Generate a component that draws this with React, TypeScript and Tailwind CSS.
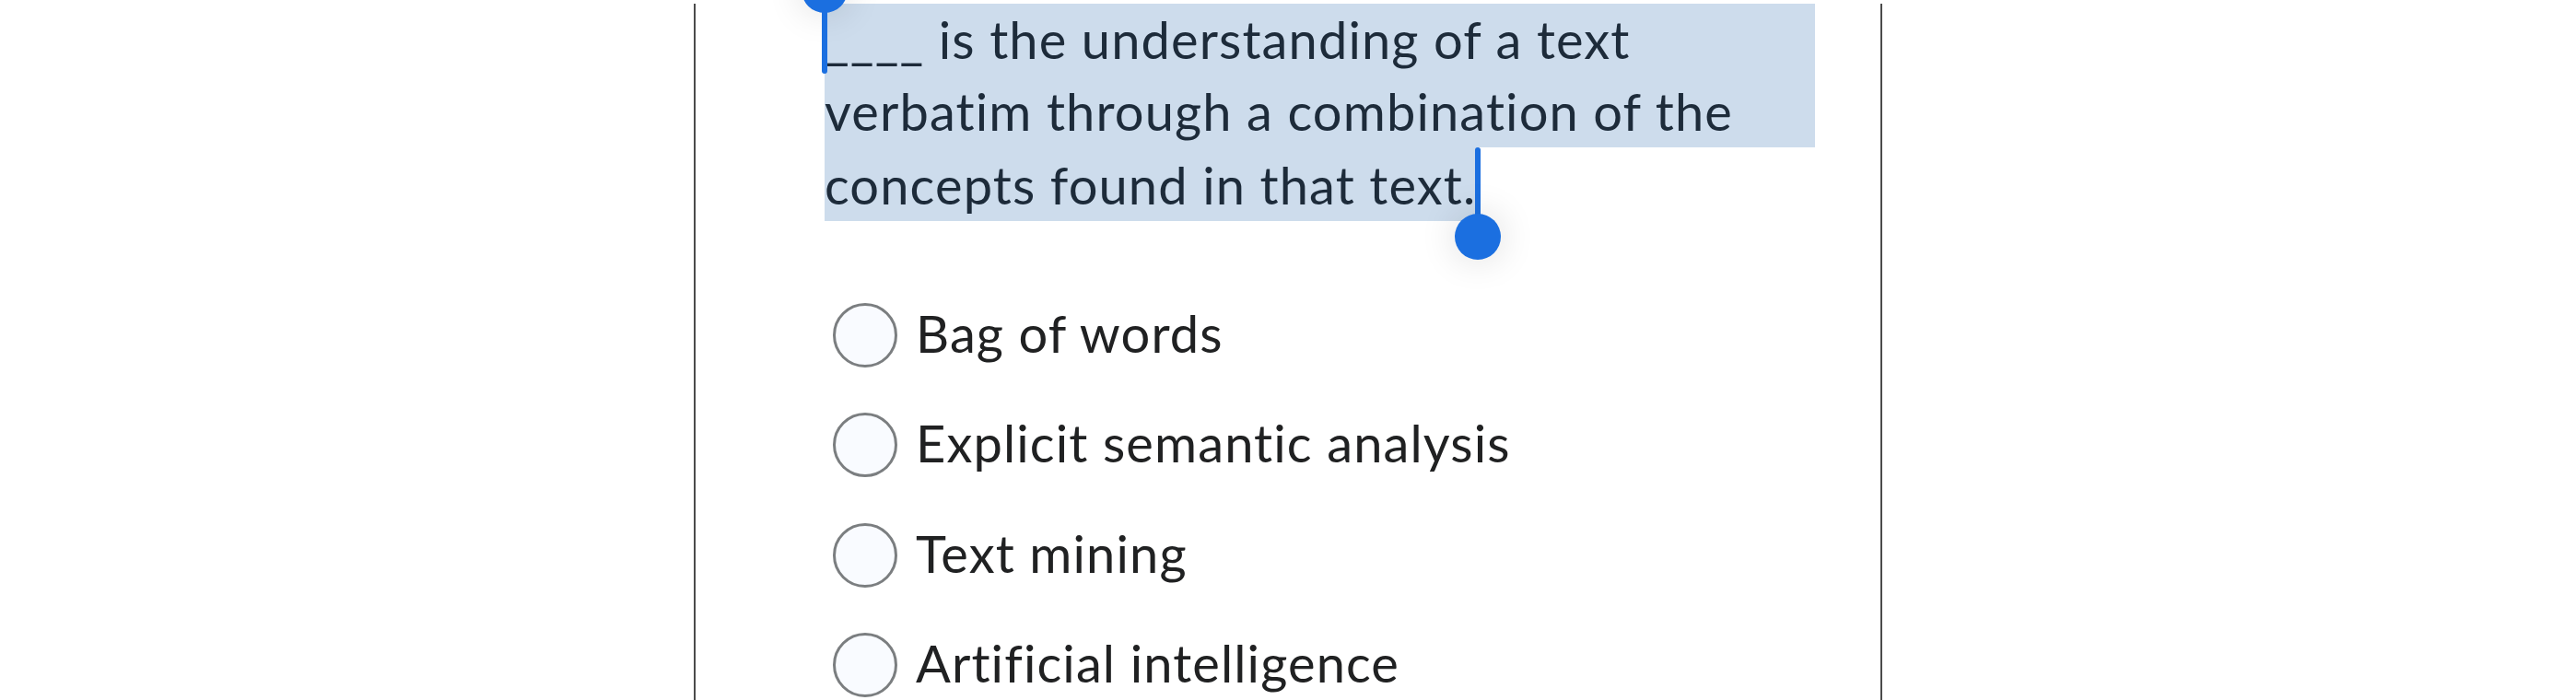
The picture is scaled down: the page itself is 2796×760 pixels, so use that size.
import React from 'react';

const options = ['Bag of words', 'Explicit semantic analysis', 'Text mining', 'Artificial intelligence'];

function Handle({ top }: { top: boolean }) {
  // iOS style selection handle: a stem with a round knob
  return (
    <div className="absolute flex flex-col items-center" style={top ? { left: -25, top: -40 } : { right: -25, top: 0 }}>
      {top ? (
        <>
          <div className="w-[50px] h-[50px] rounded-full bg-[#1b6fe0] shadow-[0_0_40px_rgba(0,0,0,0.14)]" />
          <div className="w-[6px] h-[68px] -mt-[2px] rounded-b-full bg-[#1b6fe0]" />
        </>
      ) : (
        <>
          <div className="w-[6px] h-[76px] rounded-t-full bg-[#1b6fe0]" />
          <div className="w-[50px] h-[50px] -mt-[4px] rounded-full bg-[#1b6fe0] shadow-[0_0_40px_rgba(0,0,0,0.14)]" />
        </>
      )}
    </div>
  );
}

export default function App() {
  return (
    <div className="w-full h-[760px] bg-white overflow-hidden font-['Lato','Noto_Sans',sans-serif] [font-variant-ligatures:none]">
      <div className="ml-[753px] w-[1290px] h-full border-x-2 border-[#4a4a4a] pl-[140px] pr-[71px]">
        <div className="relative mt-[4px] text-[56px] tracking-[0.02em] leading-[78px] text-[#1d2b3a]">
          <div className="relative bg-[#cddcec] pl-[1px]">
            <Handle top />
            ____ is the understanding of a text
          </div>
          <div className="bg-[#cddcec]">verbatim through a combination of the</div>
          <div className="flex">
            <span className="relative bg-[#cddcec] pr-[2px] h-[80px] pt-[2px]">
              concepts found in that text.
              <Handle top={false} />
            </span>
          </div>
        </div>
        <div className="mt-[64px] flex flex-col">
          {options.map((o) => (
            <label key={o} className="flex items-center h-[119.5px] pl-[9px] gap-[20px] text-[56px] tracking-[0.02em] text-[#202122]">
              <span className="w-[70px] h-[70px] rounded-full border-[3px] border-[#7b7e80] bg-[#f9fbff] shrink-0" />
              <span className="leading-none -mt-[4px]">{o}</span>
            </label>
          ))}
        </div>
      </div>
    </div>
  );
}
